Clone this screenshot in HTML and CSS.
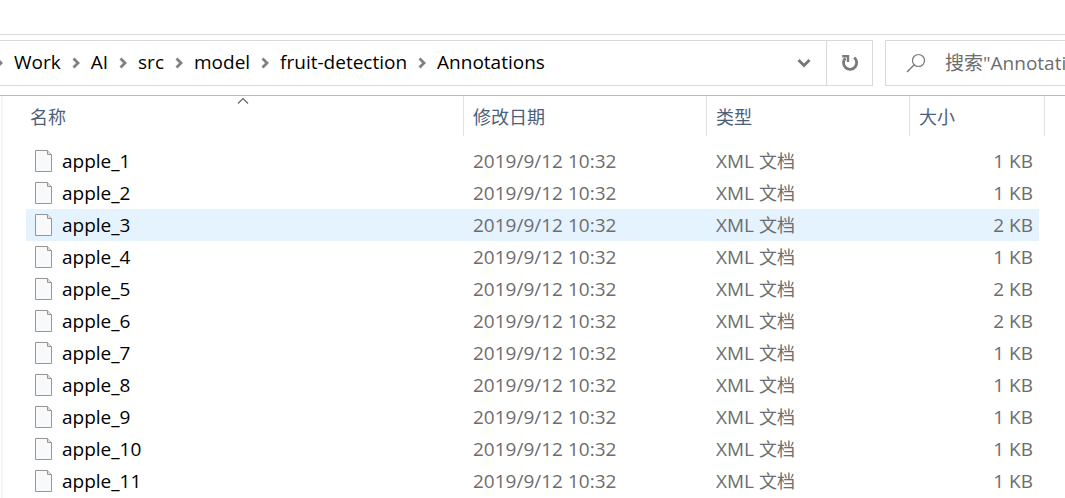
FILE: index.html
```html
<!DOCTYPE html>
<html lang="zh-CN">
<head>
    <meta charset="UTF-8">
    <meta name="viewport" content="width=device-width, initial-scale=1.0">
    <title>Annotations</title>
    <link rel="stylesheet" href="styles.css">
</head>
<body>
    <header class="toolbar">
        <div class="address-bar">
            <nav class="breadcrumbs" id="breadcrumbs" aria-label="Path"></nav>
            <button class="history" type="button" aria-label="Previous locations">
                <svg width="14" height="10" viewBox="0 0 14 10"><path d="M1.5 2 L7 7.5 L12.5 2" fill="none" stroke="#777" stroke-width="2.8"/></svg>
            </button>
            <button class="refresh" type="button" aria-label="Refresh">
                <svg width="18" height="18" viewBox="0 0 18 18"><path d="M13.2 3.6 A6.6 6.6 0 1 1 4.3 4.2" fill="none" stroke="#7a7a7a" stroke-width="2.8"/><path d="M1.2 1 H8.2 V8 H5.8 V3.4 H1.2 Z" fill="#7a7a7a"/></svg>
            </button>
        </div>
        <div class="search">
            <svg width="20" height="20" viewBox="0 0 20 20"><circle cx="12.5" cy="7.5" r="6" fill="none" stroke="#777" stroke-width="1.2"/><path d="M8.2 11.8 L1 19" stroke="#777" stroke-width="1.4"/></svg>
            <input type="text" aria-label="搜索" placeholder="搜索&quot;Annotations&quot;">
        </div>
    </header>
    <main class="files">
        <table>
            <colgroup>
                <col class="col-edge">
                <col>
                <col class="col-date">
                <col class="col-type">
                <col class="col-size">
                <col class="col-end">
            </colgroup>
            <thead>
                <tr>
                    <th colspan="2" aria-sort="ascending">
                        <svg class="sort-mark" width="12" height="8" viewBox="0 0 12 8"><path d="M1 6.5 L6 1.5 L11 6.5" fill="none" stroke="#666" stroke-width="1.2"/></svg>
                        <button type="button">名称</button>
                    </th>
                    <th><button type="button">修改日期</button></th>
                    <th><button type="button">类型</button></th>
                    <th colspan="2"><button type="button">大小</button></th>
                </tr>
            </thead>
            <tbody id="fileList"></tbody>
        </table>
    </main>
    <script>
        const path = ['Work', 'AI', 'src', 'model', 'fruit-detection', 'Annotations'];
        const sizes = [1, 1, 2, 1, 2, 2, 1, 1, 1, 1, 1];
        const selected = 3;

        const chevron = '<svg width="8" height="12" viewBox="0 0 8 12"><path d="M1.5 1.5 L6 6 L1.5 10.5" fill="none" stroke="#808080" stroke-width="2.8"/></svg>';
        const fileIcon = '<svg width="17" height="22" viewBox="0 0 17 22"><path d="M.5 .5 H12.5 L16.5 4.5 V21.5 H.5 Z" fill="#f8f9fa" stroke="#969696"/><path d="M12.5 .5 V4.5 H16.5" fill="#e4e4e4" stroke="#969696"/></svg>';

        document.getElementById('breadcrumbs').innerHTML = path.map(name =>
            `${chevron}<button type="button">${name}</button>`
        ).join('');

        document.getElementById('fileList').innerHTML = sizes.map((size, i) => `
            <tr class="${i + 1 === selected ? 'selected' : ''}">
                <td></td>
                <td class="name">${fileIcon}<span>apple_${i + 1}</span></td>
                <td>2019/9/12 10:32</td>
                <td>XML <span class="cjk">文档</span></td>
                <td class="size">${size} KB</td>
                <td></td>
            </tr>`).join('');
    </script>
</body>
</html>
```
FILE: styles.css
```css
* {
    box-sizing: border-box;
}
body {
    margin: 0;
    min-height: 100vh;
    display: flex;
    flex-direction: column;
    overflow: hidden;
    background-color: #fff;
    color: #000;
    font-family: "Open Sans", "Noto Sans CJK SC", sans-serif;
    font-size: 19px;
}
button,
input {
    font: inherit;
    color: inherit;
    background: none;
    border: 0;
    padding: 0;
}
svg {
    display: block;
    flex-shrink: 0;
}
.toolbar {
    display: flex;
    gap: 12px;
    margin-top: 34px;
    padding: 5px 0 9px;
    border-top: 1px solid #d9d9d9;
    border-bottom: 1px solid #b9b9b9;
}
.address-bar {
    flex: 1;
    display: flex;
    height: 46px;
    border: 1px solid #d9d9d9;
    border-left: 0;
}
.breadcrumbs {
    flex: 1;
    display: flex;
    align-items: center;
    gap: 11px;
    margin-left: -5px;
    white-space: nowrap;
}
.breadcrumbs button {
    padding-bottom: 2px;
}
.history {
    width: 44px;
    display: grid;
    place-items: center;
}
.refresh {
    width: 46px;
    display: grid;
    place-items: center;
    border-left: 1px solid #d9d9d9;
}
.search {
    width: 180px;
    height: 46px;
    display: flex;
    align-items: center;
    gap: 19px;
    padding-left: 20px;
    border: 1px solid #d9d9d9;
    border-right: 0;
}
.search input {
    flex: 1;
    min-width: 0;
    outline: none;
}
.search input::placeholder {
    color: #6d6d6d;
    opacity: 1;
}
.files {
    flex: 1;
    margin-left: 1px;
    padding: 0 20px 0 18px;
    border-left: 2px solid #f5f5f5;
}
table {
    width: 100%;
    table-layout: fixed;
    border-collapse: separate;
    border-spacing: 0;
}
.col-edge {
    width: 5px;
}
.col-date {
    width: 243px;
}
.col-type {
    width: 203px;
}
.col-size {
    width: 129px;
}
.col-end {
    width: 6px;
}
th {
    position: relative;
    padding: 0 0 9px;
    font-weight: normal;
}
th button {
    display: block;
    width: 100%;
    height: 40px;
    padding-left: 9px;
    border-right: 1px solid #e2e2e2;
    color: #4c607a;
    font-size: 18px;
    text-align: left;
}
.sort-mark {
    position: absolute;
    top: 1px;
    left: calc(50% - 6px);
}
td {
    height: 32px;
    padding: 0 0 0 9px;
    line-height: 32px;
    color: #6d6d6d;
    white-space: nowrap;
}
td:first-child,
td:last-child {
    padding: 0;
}
.name {
    display: flex;
    align-items: center;
    gap: 10px;
    color: #000;
}
td.size {
    padding-right: 6px;
    text-align: right;
}
.cjk {
    font-size: 18px;
}
.selected td:not(:first-child):not(:last-child) {
    background-color: #e5f3ff;
}
```
